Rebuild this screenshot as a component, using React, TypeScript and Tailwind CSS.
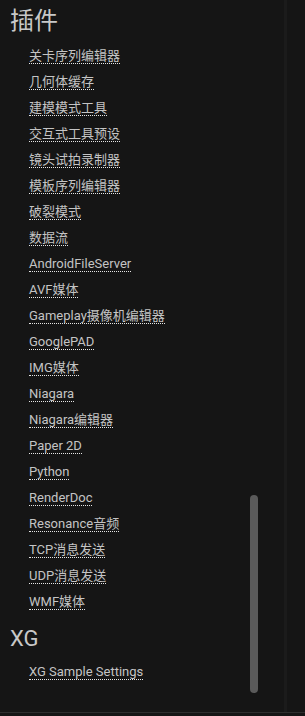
import React from 'react';

const PLUGIN_ITEMS = [
    '关卡序列编辑器',
    '几何体缓存',
    '建模模式工具',
    '交互式工具预设',
    '镜头试拍录制器',
    '模板序列编辑器',
    '破裂模式',
    '数据流',
    'AndroidFileServer',
    'AVF媒体',
    'Gameplay摄像机编辑器',
    'GooglePAD',
    'IMG媒体',
    'Niagara',
    'Niagara编辑器',
    'Paper 2D',
    'Python',
    'RenderDoc',
    'Resonance音频',
    'TCP消息发送',
    'UDP消息发送',
    'WMF媒体',
];

const FONT = { fontFamily: 'Roboto, "Noto Sans CJK SC", sans-serif' };

const Item: React.FC<{ label: string }> = ({ label }) => (
    <div className="h-[26px] flex items-center pl-[29px]">
        <span className="text-[13px] leading-[14px] text-[#c4c4c4] border-b border-dotted border-[#e6e6e6]">
            {label}
        </span>
    </div>
);

export default function App() {
    return (
        <div className="w-[305px] h-[716px] bg-[#151515] relative overflow-hidden flex flex-col" style={FONT}>
            <div className="flex flex-1 min-h-0">
                <div className="w-[284px] flex flex-col">
                    <div className="pl-[10px] pt-[5px] h-[43px] text-[24px] leading-[32px] text-[#c8c8c8]">插件</div>
                    {PLUGIN_ITEMS.map(label => (
                        <Item key={label} label={label} />
                    ))}
                    <div className="pl-[10px] pt-[10px] h-[44px] text-[22px] leading-[28px] text-[#c8c8c8]">XG</div>
                    <Item label="XG Sample Settings" />
                </div>
                <div className="w-[3px] bg-[#1b1b1b]" />
                <div className="flex-1" />
            </div>
            <div className="h-[4px] border-t border-[#2e2e2e] bg-[#151515]" />
            <div className="absolute left-[250px] top-[495px] w-[8px] h-[198px] rounded-full bg-[#5a5a5a]" />
        </div>
    );
}
